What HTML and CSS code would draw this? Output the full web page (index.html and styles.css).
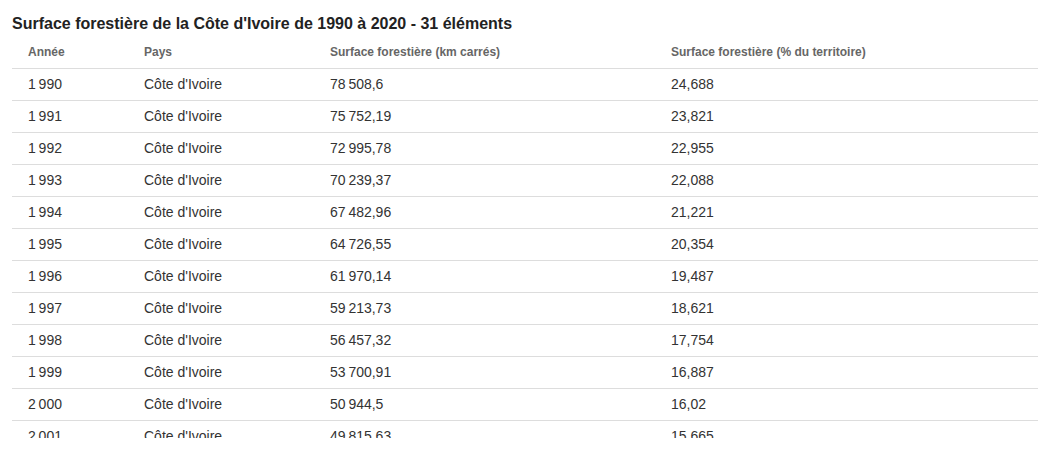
FILE: index.html
```html
<!DOCTYPE html>
<html lang="fr">
<head>
<meta charset="utf-8">
<title>Surface forestière</title>
<link rel="stylesheet" href="styles.css">
</head>
<body>
<div class="page">
  <h1 class="title">Surface forestière de la Côte d'Ivoire de 1990 à 2020 - 31 éléments</h1>
  <div class="scroller">
    <table class="data">
      <colgroup>
        <col class="c1"><col class="c2"><col class="c3"><col class="c4">
      </colgroup>
      <thead>
        <tr><th>Année</th><th>Pays</th><th>Surface forestière (km carrés)</th><th>Surface forestière (% du territoire)</th></tr>
      </thead>
      <tbody>
        <tr><td>1&#8239;990</td><td>Côte d'Ivoire</td><td>78&#8239;508,6</td><td>24,688</td></tr>
        <tr><td>1&#8239;991</td><td>Côte d'Ivoire</td><td>75&#8239;752,19</td><td>23,821</td></tr>
        <tr><td>1&#8239;992</td><td>Côte d'Ivoire</td><td>72&#8239;995,78</td><td>22,955</td></tr>
        <tr><td>1&#8239;993</td><td>Côte d'Ivoire</td><td>70&#8239;239,37</td><td>22,088</td></tr>
        <tr><td>1&#8239;994</td><td>Côte d'Ivoire</td><td>67&#8239;482,96</td><td>21,221</td></tr>
        <tr><td>1&#8239;995</td><td>Côte d'Ivoire</td><td>64&#8239;726,55</td><td>20,354</td></tr>
        <tr><td>1&#8239;996</td><td>Côte d'Ivoire</td><td>61&#8239;970,14</td><td>19,487</td></tr>
        <tr><td>1&#8239;997</td><td>Côte d'Ivoire</td><td>59&#8239;213,73</td><td>18,621</td></tr>
        <tr><td>1&#8239;998</td><td>Côte d'Ivoire</td><td>56&#8239;457,32</td><td>17,754</td></tr>
        <tr><td>1&#8239;999</td><td>Côte d'Ivoire</td><td>53&#8239;700,91</td><td>16,887</td></tr>
        <tr><td>2&#8239;000</td><td>Côte d'Ivoire</td><td>50&#8239;944,5</td><td>16,02</td></tr>
        <tr><td>2&#8239;001</td><td>Côte d'Ivoire</td><td>49&#8239;815,63</td><td>15,665</td></tr>
        <tr><td>2&#8239;002</td><td>Côte d'Ivoire</td><td>48&#8239;686,76</td><td>15,31</td></tr>
      </tbody>
    </table>
  </div>
</div>
</body>
</html>
```
FILE: styles.css
```css
html, body {
  margin: 0;
  padding: 0;
  background: #fff;
}
body {
  font-family: "Liberation Sans", Arial, sans-serif;
  color: #333;
}
.page {
  padding: 12px 12px 0 12px;
}
.title {
  margin: 0;
  font-size: 16px;
  line-height: 24px;
  font-weight: bold;
  color: #222;
}
.scroller {
  height: 402px;
  overflow: hidden;
}
.data {
  width: 100%;
  border-collapse: collapse;
  table-layout: fixed;
}
.c1 { width: 116px; }
.c2 { width: 186px; }
.c3 { width: 341px; }
.data th {
  text-align: left;
  font-size: 12px;
  font-weight: bold;
  color: #666;
  height: 32px;
  padding: 1px 16px 0 16px;
  border-bottom: 1px solid #ddd;
  box-sizing: border-box;
}
.data td {
  font-size: 14px;
  color: #333;
  height: 32px;
  padding: 0 16px;
  border-bottom: 1px solid #ddd;
  box-sizing: border-box;
}
```
